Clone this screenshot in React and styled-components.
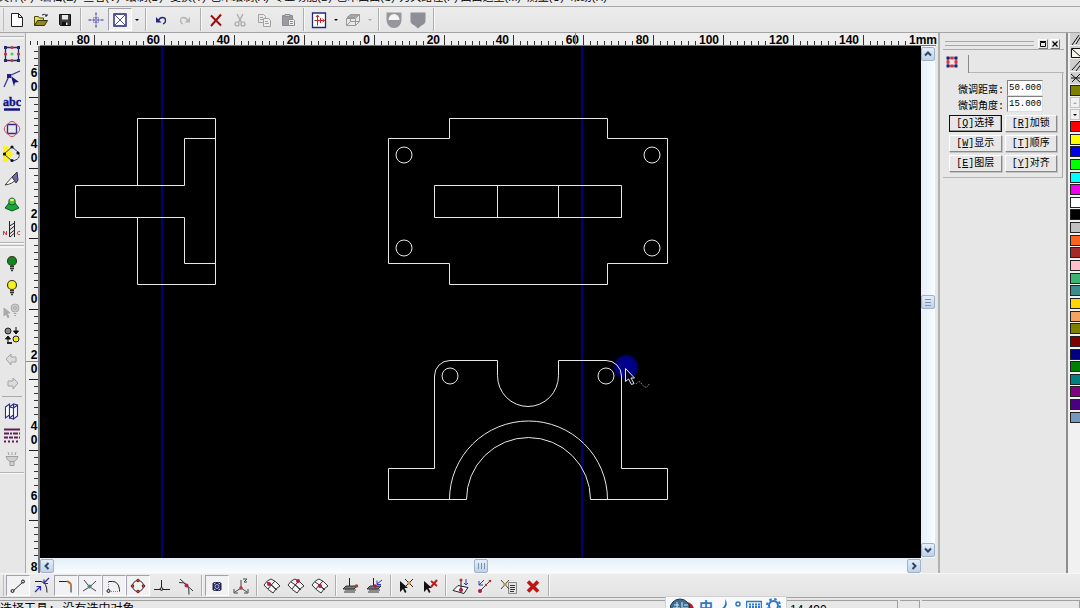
import React from "react";
import styled, { createGlobalStyle, css } from "styled-components";

const face = "#e7e7e7";
const sans = '"Liberation Sans", "Noto Sans CJK SC", sans-serif';
const mono = '"Liberation Mono", "Noto Sans CJK SC", monospace';

const GlobalStyle = createGlobalStyle`
  * { box-sizing: border-box; }
  html, body { margin: 0; height: 100%; overflow: hidden; background: ${face}; }
  button { font: inherit; color: inherit; padding: 0; margin: 0; border: 0; background: none; }
`;

const Window = styled.div`
  display: flex;
  flex-direction: column;
  height: 100vh;
  color: #000;
  background: ${face};
  font-family: ${sans};
  font-size: 12px;
`;

/* ---------- bars ---------- */

const MenuBar = styled.nav`
  display: flex;
  align-items: flex-end;
  height: 6px;
  overflow: hidden;
  background: #ececec;
  padding-bottom: 3px;
`;
const MenuItem = styled.button`
  display: flex;
  flex: none;
  justify-content: flex-end;
  width: ${(p) => (p.$wide ? 63 : 43)}px;
  line-height: 12px;
  white-space: nowrap;
  font-size: 11px;
  &:first-child { width: 34px; }
`;

const ToolBar = styled.div`
  display: flex;
  align-items: stretch;
  height: ${(p) => p.$height}px;
  padding: 1px 0 1px 3px;
  border-top: 1px solid ${(p) => (p.$height > 25 ? "#a8a8a8" : "#f6f6f6")};
  border-bottom: 1px solid #a4a4a4;
  background: linear-gradient(#ececec, #e4e4e4);
`;
const Grip = styled.span`
  width: ${(p) => p.$width}px;
  border-left: 1px solid #bdbdbd;
`;
const ToolButton = styled.button`
  display: flex;
  flex: none;
  align-items: center;
  justify-content: center;
  width: 24px;
  ${(p) =>
    p.$on &&
    css`
      background: #f2f2f4;
      border-top: 1px solid #a2a2aa;
      border-left: 1px solid #a2a2aa;
      border-right: 1px solid #fff;
      border-bottom: 1px solid #fff;
    `}
`;
const DropButton = styled.button`
  width: 10px;
  display: flex;
  align-items: center;
  justify-content: center;
  &::after {
    content: "";
    border: 2px solid transparent;
    border-top-color: ${(p) => (p.disabled ? "#aaa" : "#000")};
    border-bottom-width: 0;
  }
`;
const Divider = styled.span`
  width: 7px;
  display: flex;
  justify-content: center;
  &::before {
    content: "";
    width: 1px;
    background: #aeaeae;
    box-shadow: 1px 0 #f8f8f8;
  }
`;

/* ---------- work area ---------- */

const Workspace = styled.main`
  display: flex;
  flex: 1;
  min-height: 0;
`;
const Rail = styled.aside`
  display: flex;
  flex-direction: column;
  flex: none;
  width: 26px;
  padding-top: 3px;
  border-right: 1px solid #a9a9a9;
`;
const RailGroup = styled.div`
  display: flex;
  flex-direction: column;
  width: 24px;
  border-top: 1px solid #b5b5b5;
  border-bottom: 1px solid #b5b5b5;
  padding: ${(p) => (p.$first ? 4 : 5)}px 0 1px;
  margin-bottom: 2px;
  box-shadow: inset 0 2px #f4f4f4, 0 1px #f8f8f8;
  ${ToolButton} { height: ${(p) => (p.$first ? 25 : 24)}px; }
`;
const RailLine = styled.span`
  height: 1px;
  margin: 1px 2px 2px;
  background: #a9a9a9;
`;
const Editor = styled.section`
  display: flex;
  flex-direction: column;
  flex: 1;
  min-width: 0;
`;
const TopRuler = styled.svg`
  display: block;
  flex: none;
  width: 100%;
  height: 13px;
  background: #efefef;
`;
const Row = styled.div`
  display: flex;
  flex: 1;
  min-height: 0;
  min-width: 0;
`;
const Column = styled(Row)`
  flex-direction: column;
`;
const SideRuler = styled.svg`
  display: block;
  flex: none;
  width: 14px;
  height: 100%;
  background: #efefef;
`;
const RulerText = styled.text`
  font: bold 12px ${sans};
`;
const Drawing = styled.svg`
  display: block;
  flex: 1;
  min-width: 0;
  height: 100%;
  background: #000;
`;
const Scroll = styled.div`
  display: flex;
  flex: none;
  justify-content: space-between;
  ${(p) =>
    p.$vertical
      ? css`
          flex-direction: column;
          width: 14px;
          margin-right: 3px;
          padding: 1px 0;
          background: linear-gradient(90deg, #e6f1f8, #f8fcff);
        `
      : css`
          height: 15px;
          margin-right: 17px;
          padding: 1px 0 0;
          background: linear-gradient(#e4eff8, #f8fcff);
        `}
`;
const ScrollButton = styled.button`
  display: flex;
  align-items: center;
  justify-content: center;
  width: 14px;
  height: 14px;
  border: 1px solid #9fb2c8;
  border-radius: 2px;
  background: linear-gradient(#e3eefa, #bdd2ea);
`;

/* ---------- side panel ---------- */

const Panel = styled.aside`
  display: flex;
  flex-direction: column;
  flex: none;
  width: 130px;
  padding: 5px 2px 0 3px;
  border-left: 2px solid #b0b0b0;
  border-right: 2px solid #8d8d8d;
`;
const TitleBar = styled.header`
  display: flex;
  align-items: center;
  gap: 2px;
  height: 12px;
  padding: 0 4px 0 2px;
  border-bottom: 1px solid #aaa;
`;
const TitleGrip = styled.span`
  flex: 1;
  height: 5px;
  margin-right: 2px;
  border: solid #a9a9a9;
  border-width: 1px 0;
`;
const TinyButton = styled.button`
  display: flex;
  align-items: center;
  justify-content: center;
  width: 10px;
  height: 10px;
  border: 1px solid #fff;
  border-right-color: #777;
  border-bottom-color: #777;
`;
const Tabs = styled.div`
  display: flex;
  height: 23px;
  padding-top: 5px;
`;
const Tab = styled.button`
  width: 26px;
  border-right: 1px solid #888;
  display: flex;
  align-items: flex-start;
  padding: 1px 0 0 3px;
`;
const TabRest = styled.span`
  flex: 1;
  border-bottom: 1px solid #b5b5b5;
`;
const PanelBody = styled.div`
  padding: 7px 5px 5px 6px;
  border-right: 1px solid #a9a9a9;
  border-bottom: 1px solid #b5b5b5;
  margin-right: 1px;
  font-family: ${mono};
  font-size: 10px;
`;
const Field = styled.label`
  display: flex;
  align-items: center;
  justify-content: flex-end;
  height: 16px;
  gap: 3px;
  padding-right: 14px;
  white-space: nowrap;
`;
const FieldInput = styled.input`
  width: 36px;
  height: 16px;
  padding: 0 0 0 1px;
  border: 1px solid #808080;
  border-right-color: #ddd;
  border-bottom-color: #ddd;
  border-radius: 0;
  background: #fff;
  font: 9px ${mono};
`;
const ButtonGrid = styled.div`
  display: grid;
  grid-template-columns: 1fr 1fr;
  gap: 3px;
  padding-top: 3px;
`;
const CommandButton = styled.button`
  height: 17px;
  padding-top: 1px;
  line-height: 12px;
  white-space: nowrap;
  border: 1px solid;
  border-color: #fff #888 #888 #fff;
  box-shadow: 1px 1px #c4c4c4;
  ${(p) =>
    p.$default &&
    css`
      border-color: #111;
      box-shadow: inset -1px -1px #999;
    `}
`;

/* ---------- colour palette ---------- */

const Palette = styled.aside`
  display: flex;
  flex-direction: column;
  flex: none;
  width: 12px;
  padding-left: 2px;
  gap: 1px;
  overflow: hidden;
  background: #f1f1f1;
`;
const PaletteTool = styled.button`
  display: flex;
  width: 12px;
  height: 12px;
  background: #cfcfcf;
`;
const Swatch = styled.button`
  width: 12px;
  height: 11px;
  border: 1px solid #222;
  background: ${(p) => p.$color};
`;
const PaletteArrow = styled.button`
  display: flex;
  align-items: center;
  justify-content: center;
  width: 10px;
  height: 11px;
  border: 1px solid #c4c4c4;
  background: #f1f1f1;
  &::after {
    content: "";
    border: 2px solid transparent;
    ${(p) =>
      p.$up
        ? "border-bottom-color: #aaa; border-top-width: 0;"
        : "border-top-color: #000; border-bottom-width: 0;"}
  }
`;
const SwatchList = styled.div`
  display: flex;
  flex-direction: column;
  justify-content: space-between;
  height: 302px;
`;

/* ---------- status bar ---------- */

const StatusBar = styled.footer`
  position: relative;
  display: flex;
  gap: 2px;
  height: 10px;
  padding-top: 2px;
  background: ${face};
`;
const StatusPane = styled.span`
  flex: ${(p) => (p.$width ? "none" : 1)};
  width: ${(p) => (p.$width ? p.$width + "px" : "auto")};
  height: 18px;
  padding: 2px 0 0 ${(p) => p.$inset || 0}px;
  border-top: 1px solid #a0a0a0;
  border-right: 1px solid #a0a0a0;
  font-family: ${(p) => (p.$width ? sans : mono)};
  line-height: 14px;
  white-space: nowrap;
`;
const StatusClip = styled.div`
  display: flex;
  flex: 1;
  gap: 2px;
  height: 8px;
  overflow: hidden;
`;
const InputMethod = styled.div`
  position: absolute;
  left: 665px;
  bottom: 0;
  display: flex;
  align-items: flex-start;
  gap: 4px;
  width: 122px;
  height: 12px;
  padding: 1px 0 0 4px;
  overflow: hidden;
  border: 1px solid #d0d0d0;
  border-bottom: 0;
  background: #f7f9fb;
  color: #2f77c8;
  svg { flex: none; }
`;
const InputMode = styled.span`
  font: bold 14px "Noto Sans CJK SC", sans-serif;
  line-height: 16px;
`;

/* ---------- icons ---------- */

const Icon = ({ children, size = 18 }) => (
  <svg width={size} height={size} viewBox="0 0 18 18" fill="none" stroke="#222" aria-hidden="true">
    {children}
  </svg>
);
const Dot = ({ x, y, c = "#a0202c", r = 1.6 }) => <circle cx={x} cy={y} r={r} fill={c} stroke="none" />;

const icons = {
  new: <path d="M3.500 2.500h7l4 4v9h-11z M10.500 2.500v4h4" fill="#fff" />,
  open: (
    <>
      <path d="M2.5 14.5v-9h4l1 1.500h4v2" fill="#e6dc50" stroke="#4d4a14" />
      <path d="M2.500 14.500l3-5h10l-3 5z" fill="#8f8a1c" stroke="#33300c" />
      <path d="M10 4q3-2 5 1m0-2v2h-2" />
    </>
  ),
  save: (
    <>
      <path d="M3.500 3.500h11v11h-10l-1-1z" fill="#3c3c3c" stroke="#111" />
      <path d="M6 4h6v4.500h-6z" fill="#e8e8e8" stroke="none" />
      <path d="M6 11h6v3h-6z" fill="#111" stroke="none" />
      <path d="M10 11.500h1.500v2.500h-1.500z" fill="#eee" stroke="none" />
    </>
  ),
  cross: (
    <>
      <path d="M9 1.500v15M1.500 9h15" stroke="#2a2a9c" strokeDasharray="3 1" />
      <path d="M6.500 6.500h5v5h-5z" stroke="#6464c4" strokeDasharray="1 1" />
    </>
  ),
  frame: (
    <>
      <path d="M3 3h12v12h-12z" stroke="#20207c" strokeWidth="1.400" fill="#fff" />
      <path d="M3.500 3.500l11 11M14.500 3.500l-11 11" stroke="#4c4c98" />
    </>
  ),
  undo: (
    <>
      <path d="M6.500 9.500c1.500-4 7-4 7 0 0 1.500-1 3-2.500 3.500" stroke="#26267e" strokeWidth="1.300" />
      <path d="M4 6v5.500h5.500z" fill="#26267e" stroke="none" />
    </>
  ),
  redo: (
    <>
      <path d="M11.500 9.500c-1.500-4-7-4-7 0 0 1.500 1 3 2.500 3.500" stroke="#b5b5b5" strokeWidth="1.300" />
      <path d="M14 6v5.500h-5.500z" fill="#b5b5b5" stroke="none" />
    </>
  ),
  remove: <path d="M4 4.500l10 10M14 3.500l-10 11.500" stroke="#961010" strokeWidth="2" />,
  cut: (
    <g stroke="#a6a6a6" strokeWidth="1.200">
      <path d="M6 3l4.500 8.500M12 3l-4.500 8.500" />
      <circle cx="6" cy="13" r="2" />
      <circle cx="12" cy="13" r="2" />
    </g>
  ),
  copy: (
    <g stroke="#a2a2a2">
      <path d="M3.500 3.500h5l2 2v6h-7z M5 6.500h3M5 8.500h3" />
      <path d="M8.500 7.500h5l2 2v6h-7z" fill="#eee" />
      <path d="M10 10.500h3M10 12.500h4" />
    </g>
  ),
  paste: (
    <g stroke="#8c8c90">
      <path d="M3.500 4.500h10v10h-10z" fill="#9a9aa0" />
      <path d="M6 3.500h5v2h-5z" fill="#ccc" />
      <path d="M9.500 8.500h5l1 1v5h-6z" fill="#eee" />
      <path d="M11 10.500h3M11 12.500h3" />
    </g>
  ),
  axes: (
    <>
      <path d="M2.500 2h13v14.500h-13z" stroke="#222a78" strokeWidth="1.300" fill="#fff" />
      <path d="M7.500 4.500v10M4.500 9.500h10M6 6l1.500-2 1.500 2M12.500 8l2 1.500-2 1.500M10.500 7v5" stroke="#c22424" />
    </>
  ),
  cube: (
    <g stroke="#999">
      <path d="M2.500 7.500h9v7h-9z M2.500 7.500l4-4h9v7l-4 4M11.500 7.500l4-4M6.500 3.500v7h9M6.500 10.500l-4 4" />
      <path d="M3 6.500l3-2.500h8l-3 2.500z" fill="#aaa" />
    </g>
  ),
  shieldHalf: (
    <>
      <path d="M1.500 1.500h15v7.500a7.500 8 0 0 1-15 0z" fill="#96969c" stroke="none" />
      <path d="M3.500 9a5.500 6 0 0 1 11 0z" fill="#f4f4f4" stroke="none" />
    </>
  ),
  shield: <path d="M1.500 1.500h15v8c0 3-2 4-4 5l-3.500 3-3.500-3c-2-1-4-2-4-5z" fill="#8e8e96" stroke="none" />,

  select: (
    <>
      <path d="M2.500 2.500h13v13h-13z" stroke="#28286c" strokeWidth="1.300" />
      {[[2.5, 2.5], [15.5, 2.5], [2.5, 15.5], [15.5, 15.5]].map(([x, y]) => (
        <rect key={x + "-" + y} x={x - 1.5} y={y - 1.5} width="3" height="3" fill="#28286c" stroke="none" />
      ))}
      <Dot x={9} y={2.5} c="#c03040" /><Dot x={9} y={15.5} c="#c03040" />
      <Dot x={2.5} y={9} c="#c03040" /><Dot x={15.5} y={9} c="#c03040" />
      <Dot x={9} y={9} c="#4ccf56" />
    </>
  ),
  node: (
    <>
      <path d="M1 17l5-11L17 1" stroke="#3a3a9c" strokeWidth="1.300" />
      <rect x="4" y="4" width="4" height="4" fill="#1c1c90" stroke="none" />
      <path d="M8 6l8 6-4 .500-1 4z" fill="#16167a" stroke="none" />
    </>
  ),
  text: (
    <>
      <text x="9" y="11" textAnchor="middle" fill="#14148a" stroke="#14148a" strokeWidth=".4" fontFamily="Liberation Serif, serif" fontWeight="bold" fontSize="12">abc</text>
      <path d="M1 14.500h16" stroke="#14148a" strokeWidth="2.500" />
    </>
  ),
  shapes: (
    <>
      <path d="M4.500 4.500h9v9h-9z" stroke="#2c2c90" strokeWidth="1.300" />
      <path d="M5 4.500c1-4 7-4 8 0 5 1 5 8 0 9-1 4-7 4-8 0-5-1-5-8 0-9z" stroke="#d04848" />
    </>
  ),
  measure: (
    <>
      <path d="M0 1h4l6 8-6 8h-4z" fill="#fff21a" stroke="none" />
      <path d="M1 9l8-7 6 5M1 9l8 7c6-1 9-4 6-9" stroke="#333388" />
      <Dot x={9} y={2} c="#111" /><Dot x={15} y={8} c="#111" /><Dot x={9} y={15.500} c="#111" /><Dot x={1.500} y={9} c="#111" />
    </>
  ),
  knife: (
    <>
      <path d="M2 15l8-9 3 3q-3 5-11 6z" fill="#fff" stroke="#444" />
      <path d="M9 7l5-5 1 8-2 3z" fill="#6a6aa4" stroke="#333" />
    </>
  ),
  stamp: (
    <>
      <path d="M6 8h6l4 5-7 3-7-3z" fill="#18a838" stroke="#0c5420" />
      <path d="M6 9q-1-6 3-6t3 6q-3 2-6 0z" fill="#35c84c" stroke="#1a5c20" />
      <ellipse cx="9" cy="5" rx="2" ry="1.200" fill="#f5ef60" stroke="none" />
    </>
  ),
  drill: (
    <>
      <path d="M6.500 1v16M11.500 1v16M6.500 6l5-3M6.500 10l5-4M6.500 14l5-4M7 17l4.500-4" />
      <path d="M.5 15v-4l3 4v-4M17 11.500c-3-1-4 4 0 3" stroke="#c43c3c" />
    </>
  ),
  bulbGreen: <Bulb color="#12861c" />,
  bulbYellow: <Bulb color="#f6f01c" />,
  bulbPick: (
    <g stroke="#a8a8a8">
      <path d="M1 6v8l2-2 2 4 1-1-2-4h3z" fill="#aaa" />
      <circle cx="12" cy="6" r="4" fill="#ccc" />
      <circle cx="12" cy="6" r="1.500" />
      <path d="M10.500 11.500h3M11 13.500h2" />
    </g>
  ),
  bulbSwap: (
    <>
      <circle cx="5" cy="5" r="3" fill="#888" stroke="#222" />
      <circle cx="13" cy="13" r="3" fill="#f2ea20" stroke="#222" />
      <path d="M13 1v5M10.500 5h5L13 8zM5 17v-4M2.500 13h5L5 10z" fill="#111" stroke="#111" />
      <path d="M4 17h5" strokeWidth="2" />
    </>
  ),
  back: <path d="M3 9l5-5v3h5v5h-5v3z" fill="#dcdcdc" stroke="#a4a4a4" />,
  forward: <path d="M15 9l-5-5v3h-5v5h5v3z" fill="#dcdcdc" stroke="#a4a4a4" />,
  layers: (
    <g stroke="#2a2a84" strokeWidth="1.100">
      <path d="M2.500 5l4-3v11l-4 3z" fill="#fff" />
      <path d="M6.500 5l4-3v11l-4 3z" fill="#fff" />
      <path d="M10.500 6l4-3v11l-4 3z M6.500 5l4 1M10.500 2l4 1M6.500 16l4 1" fill="#f6f6ff" />
    </g>
  ),
  lines: (
    <g stroke="#5e2054" strokeWidth="2">
      <path d="M1 3.500h16" />
      <path d="M1 7.500h16" strokeDasharray="5 1 2 1" />
      <path d="M1 11.500h16" strokeDasharray="4 1" />
      <path d="M1 15.500h16" strokeDasharray="2 2" />
    </g>
  ),
  lamp: (
    <g stroke="#a0a0a0">
      <path d="M3 6.500h12q-1 4-4 5v4h-4v-4q-3-1-4-5z" fill="#d0d0d0" />
      <path d="M9 2v3M5 2l1 3M13 2l-1 3M7 11.500h4" />
    </g>
  ),

  endpoint: (
    <>
      <path d="M4 14L14 5" />
      <circle cx="3.500" cy="14" r="1.500" fill="#ccc" /><circle cx="14" cy="4.500" r="1.500" fill="#ccc" />
    </>
  ),
  nearest: (
    <>
      <path d="M2 4.500h6q6 1 6 11" />
      <path d="M2 15l5-5M3.500 9.500h4v4M16 1l-5 5M11 2.500v4h4" stroke="#2a2ab0" strokeWidth="1.200" />
    </>
  ),
  corner: (
    <>
      <path d="M2 4.500h9q3 1 3 3v8" />
      <path d="M10 4l4 3" stroke="#c46a20" strokeWidth="2" />
    </>
  ),
  intersect: (
    <>
      <path d="M3 3q4 7 12 11M2 14Q10 10 15 4" stroke="#444" />
      <Dot x={8.500} y={9.500} c="#3d8c8c" r={2} />
    </>
  ),
  center: (
    <>
      <path d="M3.500 4.500h4q6 0 7 8v2" />
      <path d="M3.500 5v9M4 14.500h10" stroke="#888" strokeDasharray="1 1" />
      <circle cx="3.500" cy="14" r="1.500" fill="#ccc" />
    </>
  ),
  quadrant: (
    <>
      <circle cx="9" cy="9" r="5.500" />
      {[[9, 3.5], [9, 14.5], [3.5, 9], [14.5, 9]].map(([x, y]) => (
        <circle key={x + "-" + y} cx={x} cy={y} r="1.300" fill="#cc4a3a" stroke="#6c2018" />
      ))}
    </>
  ),
  perpendicular: <><path d="M1 12.500h16M8.500 3v9.500" /><circle cx="8.500" cy="12" r="1.400" fill="#b8d0d0" /></>,
  tangent: (
    <>
      <path d="M3 2l13 12M2 5.500q11-1 10 12" stroke="#333" />
      <Dot x={9.500} y={8.500} c="#c01c48" r={2} />
    </>
  ),
  point: (
    <>
      <path d="M6 5h6l1.500 1.500v6L12 14H6l-1.500-1.500v-6z" fill="#24244c" stroke="none" />
      <path d="M6 7l1.500-1M12 7l-1.500-1M6 12l1.500 1M12 12l-1.500 1" stroke="#eef" />
      <circle cx="9" cy="9.500" r="2" fill="#222a88" stroke="#cfd6f4" strokeWidth=".8" />
    </>
  ),
  triad: (
    <>
      <path d="M9 3v8l-6 4M9 11l6 4M2 12v4h4M16 12v4h-4" stroke="#444" />
      <path d="M11 2h4l-3 3h3" stroke="#444" />
      <Dot x={9} y={11} c="#b04030" r={1.800} />
    </>
  ),
  mesh1: <Mesh x={6} y={7} />,
  mesh2: <Mesh x={11} y={4} />,
  mesh3: <Mesh x={9} y={9} />,
  plane: <><Plane /><Dot x={14.500} y={9} c="#a8442c" r={1.800} /></>,
  planeMove: (
    <>
      <Plane />
      <Dot x={9} y={9} c="#b01840" r={1.800} />
      <path d="M16 3l-5 4M11 3.500v4h4" stroke="#3434c0" />
    </>
  ),
  pickPoint: (
    <>
      <Pointer />
      <path d="M8 2l8 8M16 2l-8 8" />
      <Dot x={12} y={6} c="#d09038" r={1.800} />
    </>
  ),
  pickRemove: <><Pointer /><path d="M10 4l6 5M16 3l-6 7" stroke="#c01c1c" strokeWidth="2" /></>,
  project: (
    <>
      <path d="M1 13.500l5-5 10 2-4 6z" fill="#f5f5f5" />
      <path d="M9 2v10" />
      <path d="M14 2v6M12 6l2 2 2-2" stroke="#3434b0" />
      <Dot x={9} y={3} c="#a83838" r={1.500} /><Dot x={9} y={13} c="#a8184c" r={2} />
    </>
  ),
  moveAlong: (
    <>
      <path d="M4 14L15 3" stroke="#444" />
      <path d="M8 3L3 8M3 4v4h4" stroke="#3434b0" />
      <Dot x={14} y={4} c="#a83838" r={1.300} /><Dot x={4} y={14} c="#a8184c" r={2} /><Dot x={10} y={8} c="#a83838" r={1.200} />
    </>
  ),
  pointList: (
    <>
      <path d="M8.500 5.500h8v11h-8z" fill="#e6e6e6" stroke="#888" />
      <path d="M10 8.500h5M10 10.500h5M10 12.500h5M10 14.500h4" stroke="#333" />
      <path d="M1 3l8 9M9 3l-8 9" stroke="#444" />
      <Dot x={5} y={7.500} c="#d09038" />
    </>
  ),
  clear: <path d="M4 4.500l10 10M14 4.500l-10 10" stroke="#c01414" strokeWidth="3.600" />,
};

function Bulb({ color }) {
  return (
    <>
      <circle cx="9" cy="7" r="4.500" fill={color} stroke="#3a3a20" strokeWidth="1.200" />
      <path d="M7 12.500h4M7 14.500h4M8 16.500h2" stroke="#333" strokeWidth="1.300" />
    </>
  );
}
function Mesh({ x, y }) {
  return (
    <>
      <path d="M1 8q3-5 7-6 5 2 9 7-4 2-7 7-5-3-9-8z M4 5q4 2 10 8M12 4q-4 4-7 8M8 8q4 3 5 5" stroke="#333" fill="#f5f5f5" />
      <Dot x={x} y={y} c="#b01850" r={2} />
    </>
  );
}
function Plane() {
  return (
    <>
      <path d="M7.500 1v8" />
      <path d="M4 9h11l-3 3H1zM3 13h11M2 15h11" stroke="#333" fill="#777" />
    </>
  );
}
function Pointer() {
  return <path d="M3 4v11l3-3 2 4 1.500-1-2-4h3.500z" fill="#111" stroke="none" />;
}

/* ---------- data ---------- */

const menus = [
  ["文件(F)"], ["编辑(E)"], ["查看(V)"], ["绘制(D)"], ["变换(T)"],
  ["艺术绘制(A)", true], ["专业功能(B)", true], ["艺术曲面(S)", true], ["刀具路径(P)", true], ["曲面造型(M)", true],
  ["测量(U)"], ["帮助(H)"],
];
const mainTools = [
  ["new", "新建"], ["open", "打开"], ["save", "保存"], "|",
  ["cross", "十字"], ["frame", "全部显示", true], "v", "|",
  ["undo", "撤销"], ["redo", "重做"], "|",
  ["remove", "删除"], ["cut", "剪切"], ["copy", "复制"], ["paste", "粘贴"], "|",
  ["axes", "坐标系"], "v", ["cube", "视图"], "x", "|",
  ["shieldHalf", "半透明"], ["shield", "着色"], "|",
];
const snapTools = [
  ["endpoint", "端点", true], ["nearest", "最近点"], ["corner", "角点", true], ["intersect", "交点", true],
  ["center", "圆心", true], ["quadrant", "象限点", true], ["perpendicular", "垂足"], ["tangent", "切点"], "|",
  ["point", "点", true], ["triad", "坐标轴"], "|",
  ["mesh1", "曲面点"], ["mesh2", "曲面角点"], ["mesh3", "曲面中点"], "|",
  ["plane", "平面"], ["planeMove", "平面移动"], "|",
  ["pickPoint", "拾取点"], ["pickRemove", "取消拾取"], "|",
  ["project", "投影"], ["moveAlong", "沿线移动"], ["pointList", "点列表"], ["clear", "清除"], "|",
];
const drawTools = [
  ["select", "选择"], ["node", "节点"], ["text", "文字"], ["shapes", "图形"],
  ["measure", "测量"], ["knife", "切割"], ["stamp", "图章"], ["drill", "刀具"],
];
const viewTools = [
  ["bulbGreen", "隐藏"], ["bulbYellow", "显示"], ["bulbPick", "拾取"], ["bulbSwap", "交换"],
  ["back", "后退"], ["forward", "前进"],
];
const styleTools = [["layers", "图层"], ["lines", "线型"], ["lamp", "灯光"]];
const colors = [
  "#ff0000", "#ffff00", "#0000e6", "#00ff00", "#00ffff", "#ee00ee", "#ffffff", "#000000",
  "#c0c0c0", "#fa6420", "#a52a2a", "#ffc0cb", "#3cb371", "#3c8c8c", "#ffd700", "#f4a460",
  "#808000", "#800000", "#000080", "#008000", "#008080", "#800080", "#4b0082", "#7698c0",
];
const commands = [
  ["Q", "选择", true], ["R", "加锁"],
  ["W", "显示"], ["T", "顺序"],
  ["E", "图层"], ["Y", "对齐"],
];

const Tools = ({ items }) =>
  items.map((item, i) => {
    if (item === "|") return <Divider key={i} />;
    if (item === "v" || item === "x") return <DropButton key={i} aria-label="更多" disabled={item === "x"} />;
    return (
      <ToolButton key={i} aria-label={item[1]} $on={item[2]}>
        <Icon>{icons[item[0]]}</Icon>
      </ToolButton>
    );
  });

const topLabels = ["80", "60", "40", "20", "0", "20", "40", "60", "80", "100", "120", "140"];
const sideLabels = ["60", "40", "20", "0", "20", "40", "60", "80"];

function HorizontalRuler() {
  const marks = topLabels.map((label, i) => ({ label, x: Math.round(68 + 69.9 * i) }));
  return (
    <TopRuler shapeRendering="crispEdges">
      {[4, 11, 18, 25, 32, 39, 46].map((x) => (
        <path key={x} d={`M${x + 0.5} 8v4`} stroke="#333" />
      ))}
      {marks.map(({ label, x }, i) => {
        const next = topLabels[i + 1] || "100";
        const count = 9 - next.length;
        return (
          <g key={i}>
            <RulerText x={x - 4} y="11" textAnchor="end">{label}</RulerText>
            <path d={`M${x + 0.5} 2v10`} stroke="#333" />
            {Array.from({ length: count }, (_, n) => (
              <path key={n} d={`M${x + 7 * (n + 1) + 0.5} 8v4`} stroke="#333" />
            ))}
          </g>
        );
      })}
      <path d="M549.5 0v13" stroke="#888" />
      <RulerText x="883" y="11">1mm</RulerText>
      <path d="M14 12.500h896" stroke="#777" />
    </TopRuler>
  );
}

function VerticalRuler() {
  return (
    <SideRuler shapeRendering="crispEdges">
      {[5, 12, 19].map((y) => (
        <path key={y} d={`M8 ${y + 0.5}h4`} stroke="#333" />
      ))}
      {sideLabels.map((label, i) => {
        const y = Math.round(51 + 70.5 * i);
        const next = sideLabels[i + 1] || "00";
        return (
          <g key={i}>
            {label.split("").map((digit, n) => (
              <RulerText key={n} x="8" y={y - 6 - 14 * (label.length - 1 - n)} textAnchor="middle">{digit}</RulerText>
            ))}
            <path d={`M3 ${y + 0.5}h9`} stroke="#222" />
            {Array.from({ length: next.length > 1 ? 5 : 7 }, (_, n) => (
              <path key={n} d={`M8 ${y + 7 * (n + 1) + 0.5}h4`} stroke="#333" />
            ))}
          </g>
        );
      })}
      <path d="M0 315.500h12" stroke="#888" />
      <path d="M13 0v900" stroke="#777" strokeWidth="2" />
    </SideRuler>
  );
}

function Sheet() {
  return (
    <Drawing role="img" aria-label="三视图">
      <defs>
        <radialGradient id="glow">
          <stop offset="0" stopColor="#000090" />
          <stop offset="0.800" stopColor="#000080" />
          <stop offset="1" stopColor="#000080" stopOpacity="0" />
        </radialGradient>
      </defs>
      <g transform="translate(-40 -46)" fill="none" stroke="#e8e8e8">
        <path d="M162 46v1200M582 46v1200" stroke="#000078" strokeWidth="2" />
        <path d="M137.500 185.500V118.500H215.500V284.500H137.500V217.500" />
        <path d="M215.500 138.500H184.500V185.500H75.500V217.500H184.500V263.500H215.500" />
        <path d="M449.500 118.500H607.500V138.500H667.500V263.500H607.500V284.500H449.500V263.500H388.500V138.500H449.500Z" />
        <path d="M434.500 185.500H621.500V217.500H434.500ZM497.500 185.500V217.500M558.500 185.500V217.500" />
        {[[404, 155], [652, 155], [404, 248], [652, 248], [450, 376], [606, 376]].map(([x, y]) => (
          <circle key={x + "-" + y} cx={x} cy={y} r="8" />
        ))}
        <circle cx="626" cy="367" r="13" fill="url(#glow)" stroke="none" />
        <path d="M388.500 499.500V468.500H434.500V376A15.500 15.500 0 0 1 450 360.500H497.500V375.500A30.500 31 0 0 0 558.500 375.500V360.500H606A15.500 15.500 0 0 1 621.500 376V468.500H667.500V499.500H590.500A62 62 0 0 0 466.500 499.500Z" />
        <path d="M449.500 499.500A79 78.500 0 0 1 607.500 499.500" />
        <path d="M625.500 368.500v13l3-2.500 3 5.500 2.500-1-3-5.500h3.500z" fill="#05051c" />
        <path d="M636 384q3-4 5-1t4 4 4-3" stroke="#bbb" strokeDasharray="1 1" />
      </g>
    </Drawing>
  );
}

const Chevron = ({ d }) => (
  <svg width="8" height="8" viewBox="0 0 8 8" fill="none" stroke="#34465f" strokeWidth="2" aria-hidden="true">
    <path d={d} />
  </svg>
);
const ThumbLines = ({ d }) => (
  <svg width="8" height="8" viewBox="0 0 8 8" stroke="#7f92aa" aria-hidden="true"><path d={d} /></svg>
);

export default function App() {
  return (
    <Window>
      <GlobalStyle />
      <MenuBar>
        {menus.map(([label, wide]) => (
          <MenuItem key={label} $wide={wide}>{label}</MenuItem>
        ))}
      </MenuBar>
      <ToolBar $height={27}>
        <Grip $width={2} />
        <Tools items={mainTools} />
      </ToolBar>

      <Workspace>
        <Rail>
          <RailGroup $first><Tools items={drawTools} /></RailGroup>
          <RailGroup>
            <Tools items={viewTools} />
            <RailLine />
            <Tools items={styleTools} />
          </RailGroup>
        </Rail>

        <Editor>
          <HorizontalRuler />
          <Row>
            <VerticalRuler />
            <Column>
              <Row>
                <Sheet />
                <Scroll $vertical>
                  <ScrollButton aria-label="向上"><Chevron d="M1 5.500l3-3 3 3" /></ScrollButton>
                  <ScrollButton aria-label="垂直滑块"><ThumbLines d="M1 1.500h6M1 4.500h6M1 7.500h6" /></ScrollButton>
                  <ScrollButton aria-label="向下"><Chevron d="M1 2.500l3 3 3-3" /></ScrollButton>
                </Scroll>
              </Row>
              <Scroll>
                <ScrollButton aria-label="向左"><Chevron d="M5.500 1l-3 3 3 3" /></ScrollButton>
                <ScrollButton aria-label="水平滑块"><ThumbLines d="M1.500 1v6M4.500 1v6M7.500 1v6" /></ScrollButton>
                <ScrollButton aria-label="向右"><Chevron d="M2.500 1l3 3-3 3" /></ScrollButton>
              </Scroll>
            </Column>
          </Row>
        </Editor>

        <Panel>
          <TitleBar>
            <TitleGrip />
            <TinyButton aria-label="最大化">
              <svg width="6" height="6" viewBox="0 0 6 6" fill="none" stroke="#000" aria-hidden="true"><path d="M.5 1.500h5v4h-5zM0 .500h6" /></svg>
            </TinyButton>
            <TinyButton aria-label="关闭">
              <svg width="6" height="6" viewBox="0 0 6 6" fill="none" stroke="#000" strokeWidth="1.300" aria-hidden="true"><path d="M.5.500l5 5M5.500.500l-5 5" /></svg>
            </TinyButton>
          </TitleBar>
          <Tabs>
            <Tab aria-label="选择属性">
              <svg width="12" height="12" viewBox="0 0 12 12" fill="none" aria-hidden="true">
                <path d="M2 2h8v8h-8z" stroke="#28286c" />
                <path d="M.5.500h3v3h-3zM8.500.500h3v3h-3zM.5 8.500h3v3h-3zM8.500 8.500h3v3h-3z" fill="#20207a" />
                <path d="M4.500.500h3v3h-3zM4.500 8.500h3v3h-3zM.5 4.500h3v3h-3zM8.500 4.500h3v3h-3z" fill="#e02c34" />
              </svg>
            </Tab>
            <TabRest />
          </Tabs>
          <PanelBody>
            <Field>微调距离:<FieldInput defaultValue="50.000" /></Field>
            <Field>微调角度:<FieldInput defaultValue="15.000" /></Field>
            <ButtonGrid>
              {commands.map(([key, label, isDefault]) => (
                <CommandButton key={key} $default={isDefault}>[<u>{key}</u>]{label}</CommandButton>
              ))}
            </ButtonGrid>
          </PanelBody>
        </Panel>

        <Palette>
          {["M2 12L9 2M6 11l5-8", "M1.500 2.500h10v9h-10zM2 3l9 8", "M2 11L10 2M6 12l6-8", "M1 2l10 9M2 10l8-8M1 6h10"].map((d) => (
            <PaletteTool key={d} aria-label="画笔">
              <svg width="12" height="12" viewBox="0 0 12 12" fill="#f6f6ee" stroke="#111" aria-hidden="true"><path d={d} /></svg>
            </PaletteTool>
          ))}
          <Swatch $color="#808000" aria-label="当前颜色" />
          <PaletteArrow $up aria-label="上一页" />
          <PaletteArrow aria-label="下一页" />
          <SwatchList>
            {colors.map((color) => <Swatch key={color} $color={color} aria-label={color} />)}
          </SwatchList>
        </Palette>
      </Workspace>

      <ToolBar $height={25}>
        <Grip $width={3} />
        <Tools items={snapTools} />
      </ToolBar>

      <StatusBar>
        <StatusClip>
          <StatusPane>选择工具: 没有选中对象</StatusPane>
          <StatusPane $width={111} $inset={3}>14.490</StatusPane>
          <StatusPane $width={20} />
          <StatusPane $width={158} />
        </StatusClip>
        <InputMethod>
          <svg width="25" height="22" viewBox="0 0 25 22" aria-hidden="true">
            <circle cx="16" cy="12" r="8" fill="#b02020" />
            <circle cx="10" cy="11" r="10" fill="#3c6e94" stroke="#1c3850" />
            <path d="M4 7h5M3 10h7M12 4v8M14 7h4M13 10h5M7 4v8" stroke="#dcecf8" />
          </svg>
          <InputMode>中</InputMode>
          <svg width="13" height="14" viewBox="0 0 13 14" aria-hidden="true"><path d="M8 1c4 5 1 11-6 11 5-2 7-6 6-11z" fill="#2f77c8" /></svg>
          <svg width="8" height="14" viewBox="0 0 8 14" fill="none" stroke="#2f77c8" strokeWidth="1.500" aria-hidden="true"><circle cx="4" cy="6" r="2" /></svg>
          <svg width="16" height="14" viewBox="0 0 16 14" fill="none" stroke="#2f77c8" aria-hidden="true"><path d="M.5 3.500h15v10h-15z" strokeWidth="1.500" /><path d="M3 6.500h11M3 9h11" strokeWidth="2" strokeDasharray="2 1" /></svg>
          <svg width="15" height="15" viewBox="0 0 15 15" fill="none" stroke="#2f77c8" aria-hidden="true"><circle cx="7.500" cy="7.500" r="4.500" strokeWidth="2" /><circle cx="7.500" cy="7.500" r="6.500" strokeWidth="2" strokeDasharray="2.500 2.600" /></svg>
        </InputMethod>
      </StatusBar>
    </Window>
  );
}
